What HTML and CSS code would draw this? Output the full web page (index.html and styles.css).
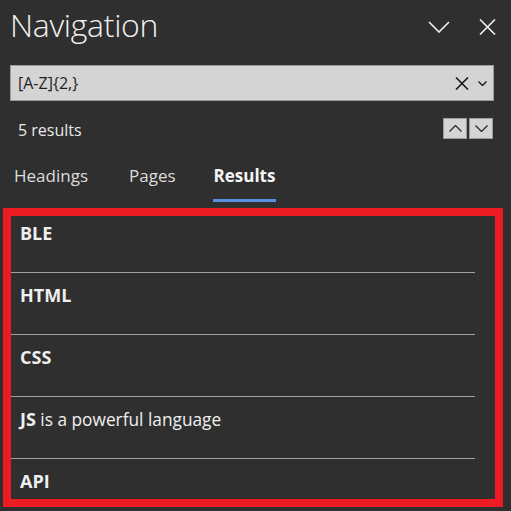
FILE: index.html
```html
<!DOCTYPE html>
<html lang="en">
<head>
<meta charset="utf-8">
<title>Navigation</title>
<link rel="stylesheet" href="styles.css">
</head>
<body>
<div class="pane">
  <header class="pane-head">
    <h1 class="pane-title">Navigation</h1>
    <div class="head-actions">
      <button class="head-btn head-btn-menu" aria-label="Task pane options">
        <svg width="22" height="12" viewBox="0 0 22 12"><path d="M1 1 L11 11 L21 1" fill="none" stroke="#f0f0f0" stroke-width="1.6"/></svg>
      </button>
      <button class="head-btn head-btn-close" aria-label="Close">
        <svg width="17" height="16" viewBox="0 0 17 16"><path d="M1 0.5 L16 15.5 M16 0.5 L1 15.5" fill="none" stroke="#f0f0f0" stroke-width="1.6"/></svg>
      </button>
    </div>
  </header>

  <div class="search">
    <span class="search-text">[A-Z]{2,}</span>
    <span class="search-clear">
      <svg width="14" height="13" viewBox="0 0 14 13"><path d="M1 0.5 L13 12.5 M13 0.5 L1 12.5" fill="none" stroke="#1a1a1a" stroke-width="1.6"/></svg>
    </span>
    <span class="search-drop">
      <svg width="9" height="5" viewBox="0 0 9 5"><path d="M0.5 0.5 L4.5 4.5 L8.5 0.5" fill="none" stroke="#1a1a1a" stroke-width="1.4"/></svg>
    </span>
  </div>

  <div class="result-bar">
    <span class="result-count">5 results</span>
    <div class="steppers">
      <button class="stepper" aria-label="Previous result">
        <svg width="13" height="7" viewBox="0 0 13 7"><path d="M0.5 6.5 L6.5 0.5 L12.5 6.5" fill="none" stroke="#2a2a2a" stroke-width="1.3"/></svg>
      </button>
      <button class="stepper" aria-label="Next result">
        <svg width="13" height="7" viewBox="0 0 13 7"><path d="M0.5 0.5 L6.5 6.5 L12.5 0.5" fill="none" stroke="#2a2a2a" stroke-width="1.3"/></svg>
      </button>
    </div>
  </div>

  <nav class="tabs">
    <a class="tab">Headings</a>
    <a class="tab">Pages</a>
    <a class="tab tab-active">Results</a>
  </nav>

  <div class="results">
    <ul class="result-list">
      <li class="result"><b>BLE</b></li>
      <li class="result"><b>HTML</b></li>
      <li class="result"><b>CSS</b></li>
      <li class="result"><b>JS</b> is a powerful language</li>
      <li class="result"><b>API</b></li>
    </ul>
  </div>
</div>
</body>
</html>
```

FILE: styles.css
```css
* {
  box-sizing: border-box;
}

html,
body {
  margin: 0;
  height: 100%;
  background: #2f2f2f;
}

body {
  font-family: "Open Sans", "Noto Sans", sans-serif;
  color: #efefef;
}

.pane {
  display: flex;
  flex-direction: column;
  height: 511px;
}

/* title row */
.pane-head {
  display: flex;
  align-items: center;
  justify-content: space-between;
  height: 54px;
  padding: 0 15px 0 10px;
}

.pane-title {
  margin: 0 0 4px 0;
  font-size: 32px;
  font-weight: 300;
  line-height: 1;
  color: #f2f2f2;
  letter-spacing: -0.3px;
}

.head-actions {
  display: flex;
  align-items: center;
  gap: 29px;
}

.head-btn {
  display: flex;
  padding: 0;
  border: 0;
  background: none;
}

/* search box */
.search {
  display: flex;
  align-items: center;
  height: 36px;
  margin: 11px 17px 0 10px;
  padding: 0 6px 0 7px;
  background: #d4d4d4;
  border: 1px solid #9b9b9b;
}

.search-text {
  flex: 1;
  font-size: 16px;
  color: #1e1e1e;
}

.search-clear {
  display: flex;
  margin-right: 9px;
}

.search-drop {
  display: flex;
}

/* count + previous/next */
.result-bar {
  display: flex;
  align-items: center;
  justify-content: space-between;
  height: 22px;
  margin: 16px 18px 0 18px;
}

.result-count {
  font-size: 16px;
  line-height: 22px;
  padding-top: 4px;
  color: #e8e8e8;
}

.steppers {
  display: flex;
  gap: 2px;
}

.stepper {
  display: flex;
  align-items: center;
  justify-content: center;
  width: 24px;
  height: 21px;
  padding: 0;
  background: #d4d4d4;
  border: 1px solid #9b9b9b;
}

/* tabs */
.tabs {
  display: flex;
  gap: 39px;
  height: 63px;
  margin: 0 0 0 13px;
  padding-top: 22px;
}

.tab {
  font-size: 17px;
  line-height: 30px;
  color: #dcdcdc;
  padding: 0 1px;
  height: 41px;
}

.tab-active {
  margin-left: -3px;
  font-weight: 700;
  color: #f5f5f5;
  border-bottom: 3px solid #5b8ee0;
}

/* results list with highlight frame */
.results {
  margin: 6px 8px 4px 3px;
  flex: 1;
  border: 8px solid #ed1c24;
  overflow: hidden;
}

.result-list {
  list-style: none;
  margin: -5px 0 0 0;
  padding: 0;
}

.result {
  height: 62px;
  margin-right: 20px;
  padding: 10px 0 0 9px;
  font-size: 17.3px;
  color: #efefef;
  border-bottom: 1px solid #a2a2a2;
}

.result b {
  font-weight: 700;
  font-size: 18px;
}
```
